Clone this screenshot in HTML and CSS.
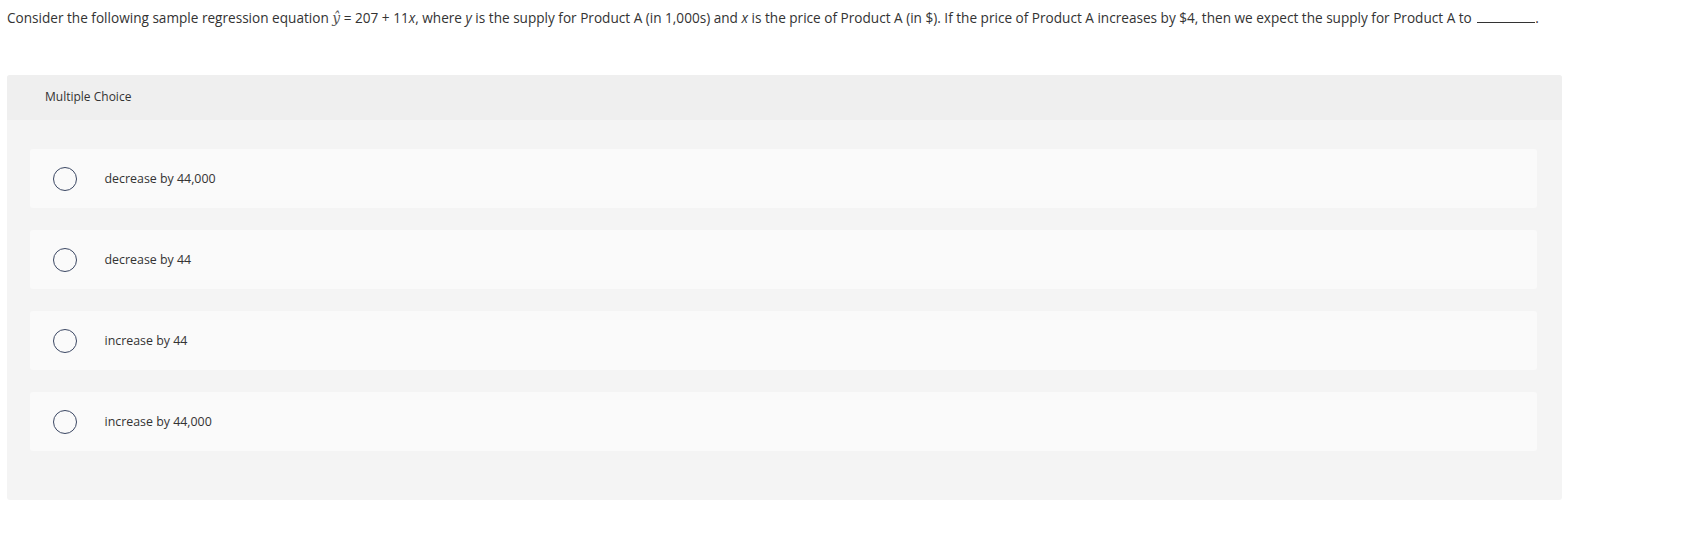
FILE: index.html
```html
<!DOCTYPE html>
<html>
<head>
<meta charset="utf-8">
<link rel="stylesheet" href="styles.css">
</head>
<body>
<p class="question">Consider the following sample regression equation <span class="yhat">ŷ</span> = 207 + 11<i>x</i>, where <i>y</i> is the supply for Product A (in 1,000s) and <i>x</i> is the price of Product A (in $). If the price of Product A increases by $4, then we expect the supply for Product A to <span class="blank"></span>.</p>
<div class="panel">
  <div class="panel-head">Multiple Choice</div>
  <div class="panel-body">
    <div class="option"><span class="radio"></span><span class="label">decrease by 44,000</span></div>
    <div class="option"><span class="radio"></span><span class="label">decrease by 44</span></div>
    <div class="option"><span class="radio"></span><span class="label">increase by 44</span></div>
    <div class="option"><span class="radio"></span><span class="label">increase by 44,000</span></div>
  </div>
</div>
</body>
</html>
```
FILE: styles.css
```css
html, body {
  margin: 0;
  padding: 0;
  background: #ffffff;
}
body {
  font-family: "Open Sans", "Lato", sans-serif;
  color: #333333;
}
.question {
  margin: 0;
  padding: 9px 0 0 7px;
  font-size: 13.6px;
  line-height: 18px;
  height: 64px;
  box-sizing: border-box;
  white-space: nowrap;
}
.question i {
  font-style: italic;
}
.yhat {
  font-family: "DejaVu Serif", "Liberation Serif", serif;
  font-style: italic;
  font-size: 14px;
  color: #555;
}
.blank {
  display: inline-block;
  width: 58px;
  border-bottom: 1px solid #333;
  margin-left: 2px;
}
.panel {
  margin-left: 7px;
  margin-top: 11px;
  width: 1555px;
  background: #f4f4f4;
  border-radius: 3px;
  overflow: hidden;
}
.panel-head {
  height: 45px;
  background: #efefef;
  display: flex;
  align-items: center;
  padding-left: 38px;
  padding-bottom: 3px;
  box-sizing: border-box;
  font-size: 12px;
  color: #333;
}
.panel-body {
  padding: 29px 25px 49px 23px;
  display: flex;
  flex-direction: column;
  gap: 22px;
}
.option {
  height: 59px;
  background: #fafafa;
  border-radius: 3px;
  display: flex;
  align-items: center;
}
.radio {
  width: 22px;
  height: 22px;
  border: 1.5px solid #3b4763;
  border-radius: 50%;
  margin-left: 22.5px;
  flex: none;
}
.label {
  margin-left: 28px;
  font-size: 12.4px;
  color: #333;
}
```
